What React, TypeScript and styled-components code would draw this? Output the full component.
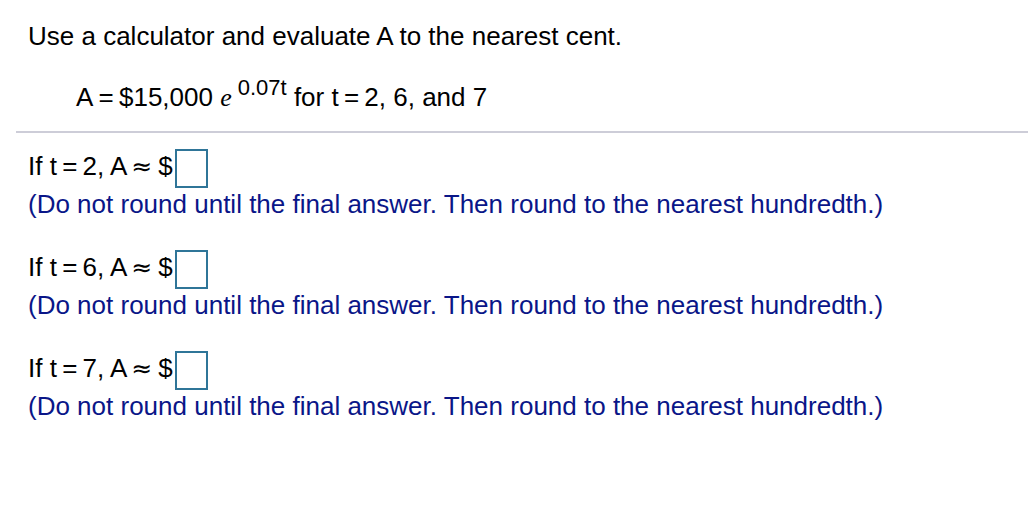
import styled, { createGlobalStyle } from "styled-components";

const GlobalStyle = createGlobalStyle`
  html, body {
    margin: 0;
    padding: 0;
    background: #ffffff;
  }
  body {
    font-family: "Liberation Sans", Arial, sans-serif;
    color: #000000;
  }
`;

const Page = styled.div`
  padding: 21px 0 0 16px;
  width: 1028px;
  box-sizing: border-box;
`;

const Block = styled.div`
  padding-left: 12px;
`;

const Prompt = styled.div`
  font-size: 26px;
  line-height: 30px;
`;

const Formula = styled.div`
  font-size: 26px;
  line-height: 30px;
  margin: 31px 0 0 48px;
  white-space: nowrap;
`;

const Euler = styled.span`
  font-family: "Liberation Serif", "Times New Roman", serif;
  font-style: italic;
`;

const Power = styled.span`
  font-size: 22px;
  line-height: 0;
  vertical-align: 11px;
  margin-left: 6px;
`;

const Divider = styled.div`
  height: 2px;
  background: #cdcdd8;
  margin-top: 18px;
`;

const Questions = styled(Block)`
  display: flex;
  flex-direction: column;
  gap: 30px;
  padding-top: 15px;
`;

const Question = styled.div`
  display: flex;
  flex-direction: column;
`;

const AnswerRow = styled.div`
  display: flex;
  align-items: center;
  height: 40px;
`;

const Label = styled.span`
  font-size: 26px;
  line-height: 30px;
  padding-bottom: 4px;
  white-space: nowrap;
`;

const Approx = styled.span`
  font-family: "DejaVu Sans", sans-serif;
  font-size: 25px;
  margin: 0 6px 0 4px;
`;

const AnswerBox = styled.span`
  display: inline-block;
  width: 29px;
  height: 35px;
  border: 2px solid #2f7598;
  margin-left: 2px;
`;

const Hint = styled.div`
  font-size: 26px;
  line-height: 30px;
  color: #0a1688;
  margin-top: 1px;
`;

const values = [2, 6, 7];

export default function App() {
  return (
    <Page>
      <GlobalStyle />
      <Block>
        <Prompt>Use a calculator and evaluate A to the nearest cent.</Prompt>
        <Formula>
          A{"\u2009"}={"\u2009"}$15,000 <Euler>e</Euler>
          <Power>0.07t</Power> for t{"\u2009"}={"\u2009"}2, 6, and 7
        </Formula>
      </Block>
      <Divider />
      <Questions>
        {values.map((t) => (
          <Question key={t}>
            <AnswerRow>
              <Label>
                If t{"\u2009"}={"\u2009"}
                {t}, A<Approx>≈</Approx>$
              </Label>
              <AnswerBox />
            </AnswerRow>
            <Hint>
              (Do not round until the final answer. Then round to the nearest
              hundredth.)
            </Hint>
          </Question>
        ))}
      </Questions>
    </Page>
  );
}
